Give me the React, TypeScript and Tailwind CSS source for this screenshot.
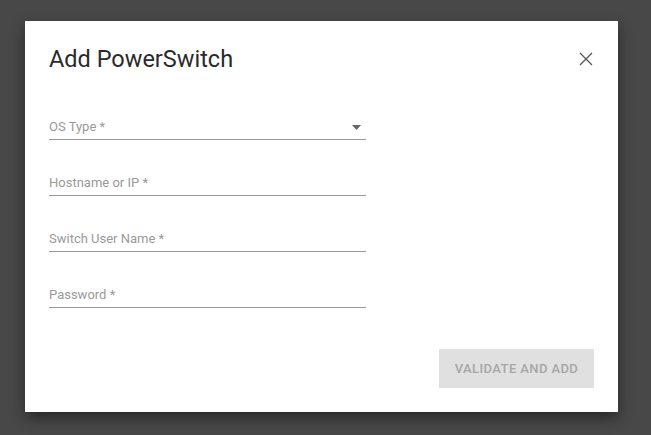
export default function App() {
  const fields = ['Hostname or IP *', 'Switch User Name *', 'Password *']

  return (
    <main className="h-[435px] w-[651px] bg-[#484848] pl-[25px] pt-[21px] font-['Roboto',sans-serif]">
      <div className="flex h-[391px] w-[593px] flex-col bg-white px-[24px] pb-[24px] pt-[24px] shadow-[0_6px_14px_rgba(0,0,0,0.45)]">
        {/* header */}
        <div className="flex items-center justify-between">
          <h1 className="text-[23.5px] leading-[28px] font-normal text-[#2a2a2a]">Add PowerSwitch</h1>
          <button className="flex h-[16px] w-[16px] items-center justify-center text-[#555]">
            <svg width="14" height="14" viewBox="0 0 14 14" fill="none" stroke="currentColor" strokeWidth="1.3">
              <path d="M1 1 L13 13 M13 1 L1 13" />
            </svg>
          </button>
        </div>

        {/* form */}
        <div className="mt-[46px] flex w-[317px] flex-col gap-[35px] text-[13px] leading-[16px] text-[#9a9a9a]">
          <div className="flex items-center justify-between border-b border-[#9a9a9a] pb-[4px] pr-[5px]">
            <span>OS Type *</span>
            <svg width="9" height="5" viewBox="0 0 9 5" className="text-[#666]">
              <path d="M0 0 L9 0 L4.5 5 Z" fill="currentColor" />
            </svg>
          </div>
          {fields.map((f) => (
            <div key={f} className="border-b border-[#9a9a9a] pb-[4px]">
              <span className="block">{f}</span>
            </div>
          ))}
        </div>

        {/* actions */}
        <div className="mt-auto flex justify-end">
          <button className="h-[39px] w-[155px] bg-[#e0e0e0] text-[13px] font-medium tracking-[0.4px] text-[#a6a6a6]">
            VALIDATE AND ADD
          </button>
        </div>
      </div>
    </main>
  )
}
